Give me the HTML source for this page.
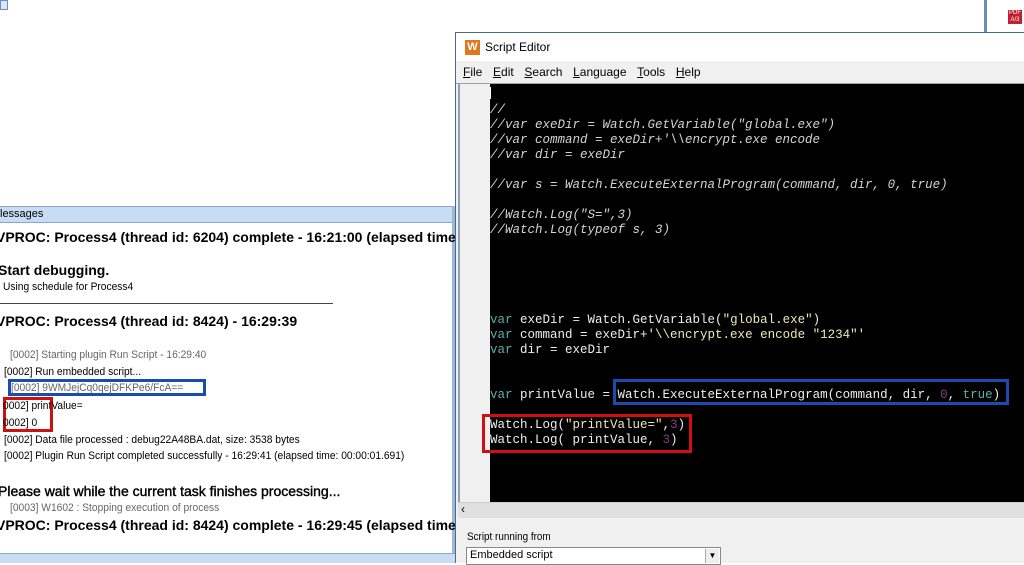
<!DOCTYPE html>
<html><head><meta charset="utf-8"><style>
*{margin:0;padding:0;box-sizing:border-box}
body{width:1024px;height:563px;overflow:hidden;background:#fff;position:relative;font-family:"Liberation Sans",sans-serif}
.a{position:absolute;white-space:nowrap}
.b{font-weight:bold;font-size:14px;color:#000}
.s{font-size:11px;color:#000;transform:scaleX(.93);transform-origin:left}
.g{color:#666}
.code{font-family:"Liberation Mono",monospace;font-size:12.5px;line-height:15px}
.c{color:#d4d4d4;font-style:italic}
.k{color:#5fb0a8}
.w{color:#eee}
.y{color:#eee8b8}
.p{color:#8a3a8a}
</style></head><body>
<div class="a" style="left:0;top:0;width:8px;height:10px;border:1px solid #6a8cc8;background:#dbe6f4"></div>
<div class="a" style="left:984px;top:0;width:3px;height:33px;background:#6a8cc0"></div>
<div class="a" style="left:1008px;top:10px;width:14px;height:14px;background:#c02030;color:#fff;font-size:6px;line-height:7px;text-align:center">PDF<br>A/3</div>

<div class="a" style="left:0;top:206px;width:456px;height:17px;background:#c8dcf4;border-top:1px solid #8aa8d0;border-bottom:1px solid #8aa8d0;font-size:11px;line-height:15px">lessages</div>
<div class="a" style="left:452px;top:206px;width:4px;height:357px;background:#9cb8dc"></div>
<div class="a b" style="left:-4px;top:229px">VPROC: Process4 (thread id: 6204) complete - 16:21:00 (elapsed time: 0</div>
<div class="a b" style="left:-2px;top:262px">Start debugging.</div>
<div class="a s" style="left:3px;top:281px">Using schedule for Process4</div>
<div class="a" style="left:0;top:303px;width:333px;height:1px;background:#444"></div>
<div class="a b" style="left:-4px;top:313px">VPROC: Process4 (thread id: 8424) - 16:29:39</div>
<div class="a s g" style="left:10px;top:349px">[0002] Starting plugin Run Script - 16:29:40</div>
<div class="a s" style="left:4px;top:366px">[0002] Run embedded script...</div>
<div class="a" style="left:8px;top:379px;width:198px;height:17px;border:3px solid #1a4cb0"></div>
<div class="a s g" style="left:11px;top:382px">[0002] 9WMJejCq0qejDFKPe6/FcA==</div>
<div class="a" style="left:3px;top:397px;width:50px;height:35px;border:3px solid #d01010"></div>
<div class="a s" style="left:3px;top:400px">0002] printValue=</div>
<div class="a s" style="left:3px;top:417px">0002] 0</div>
<div class="a s" style="left:4px;top:434px">[0002] Data file processed : debug22A48BA.dat, size: 3538 bytes</div>
<div class="a s" style="left:4px;top:450px">[0002] Plugin Run Script completed successfully - 16:29:41 (elapsed time: 00:00:01.691)</div>
<div class="a b" style="left:-2px;top:483px;font-weight:normal;-webkit-text-stroke:.4px #000">Please wait while the current task finishes processing...</div>
<div class="a s g" style="left:10px;top:502px">[0003] W1602 : Stopping execution of process</div>
<div class="a b" style="left:-4px;top:517px">VPROC: Process4 (thread id: 8424) complete - 16:29:45 (elapsed time: 0</div>
<div class="a" style="left:0;top:553px;width:456px;height:10px;background:#c8dcf4;border-top:1px solid #8aa8d0"></div>

<div class="a" style="left:455px;top:32px;width:569px;height:531px;background:#f0f0f0;border-left:1px solid #4a6a8a;border-top:1px solid #4a6a8a"></div>
<div class="a" style="left:456px;top:33px;width:568px;height:28px;background:#fff"></div>
<div class="a" style="left:465px;top:40px;width:15px;height:15px;background:#e07820;color:#fff;font-weight:bold;font-size:11px;line-height:15px;text-align:center">W</div>
<div class="a" style="left:485px;top:39px;font-size:12px;line-height:16px">Script Editor</div>
<div class="a" style="left:463px;top:64px;font-size:12px;line-height:16px;word-spacing:2px"><u>F</u>ile &nbsp;<u>E</u>dit &nbsp;<u>S</u>earch &nbsp;<u>L</u>anguage &nbsp;<u>T</u>ools &nbsp;<u>H</u>elp</div>
<div class="a" style="left:456px;top:83px;width:568px;height:1px;background:#a0a0a0"></div>
<div class="a" style="left:458px;top:84px;width:2px;height:418px;background:#8aa0b8"></div>
<div class="a" style="left:460px;top:84px;width:30px;height:418px;background:#f0f0f0"></div>
<div class="a" style="left:490px;top:84px;width:534px;height:418px;background:#000"></div>
<div class="a" style="left:490px;top:87px;width:1px;height:12px;background:#fff"></div>
<div class="a code" style="left:490px;top:103px">
<div class="c">//</div>
<div class="c">//var exeDir = Watch.GetVariable("global.exe")</div>
<div class="c">//var command = exeDir+'\\encrypt.exe encode</div>
<div class="c">//var dir = exeDir</div>
<div>&nbsp;</div>
<div class="c">//var s = Watch.ExecuteExternalProgram(command, dir, 0, true)</div>
<div>&nbsp;</div>
<div class="c">//Watch.Log("S=",3)</div>
<div class="c">//Watch.Log(typeof s, 3)</div>
<div>&nbsp;</div><div>&nbsp;</div><div>&nbsp;</div><div>&nbsp;</div><div>&nbsp;</div>
<div class="w"><span class="k">var</span> exeDir = Watch.GetVariable(<span class="y">"global.exe"</span>)</div>
<div class="w"><span class="k">var</span> command = exeDir+<span class="y">'\\encrypt.exe encode "1234"'</span></div>
<div class="w"><span class="k">var</span> dir = exeDir</div>
<div>&nbsp;</div><div>&nbsp;</div>
<div class="w"><span class="k">var</span> printValue = Watch.ExecuteExternalProgram(command, dir, <span class="p">0</span>, <span class="k">true</span>)</div>
<div>&nbsp;</div>
<div class="w">Watch.Log(<span class="y">"printValue="</span>,<span class="p">3</span>)</div>
<div class="w">Watch.Log( printValue, <span class="p">3</span>)</div>
</div>
<div class="a" style="left:613px;top:379px;width:396px;height:26px;border:3px solid #1a4cb0"></div>
<div class="a" style="left:482px;top:414px;width:210px;height:39px;border:3px solid #d01010"></div>
<div class="a" style="left:458px;top:502px;width:566px;height:16px;background:#e0e0e0;border-top:1px solid #ccc"></div>
<div class="a" style="left:461px;top:502px;font-size:12px">&lsaquo;</div>
<div class="a" style="left:467px;top:531px;font-size:11px;transform:scaleX(.9);transform-origin:left">Script running from</div>
<div class="a" style="left:466px;top:547px;width:255px;height:18px;background:#fff;border:1px solid #888;font-size:11px;line-height:15px;padding-left:3px">Embedded script</div>
<div class="a" style="left:705px;top:549px;width:14px;height:14px;background:#eee;border-left:1px solid #aaa;font-size:8px;text-align:center;line-height:14px">▼</div>
</body></html>
